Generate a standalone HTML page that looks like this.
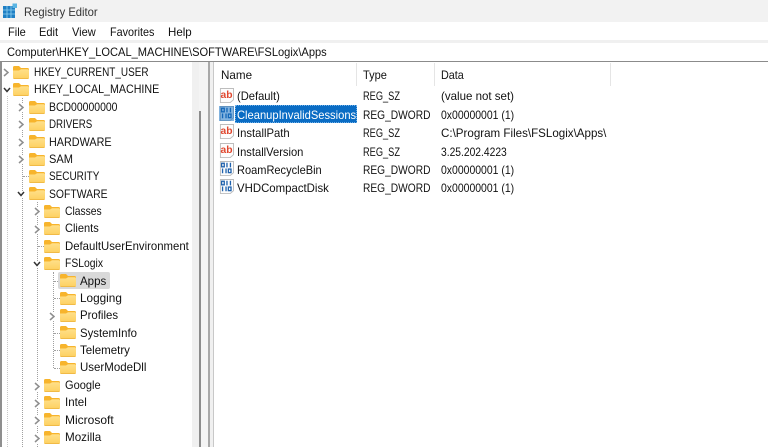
<!DOCTYPE html>
<html><head><meta charset="utf-8">
<style>
html,body{margin:0;padding:0;width:768px;height:447px;overflow:hidden;background:#fff}
body{position:relative;font-family:"Liberation Sans",sans-serif;font-size:12px;color:#111}
#w{position:absolute;left:0;top:0;width:768px;height:447px;overflow:hidden;filter:blur(.35px)}
.a{position:absolute}
.t{position:absolute;white-space:nowrap;line-height:16px;height:16px;transform-origin:0 50%;transform:scaleX(var(--s,1))}
svg{position:absolute;overflow:visible}
svg.k{background:#fff}
.d{position:absolute;border-left:1px dotted #a0a0a0}
.h{position:absolute;border-top:1px dotted #a0a0a0}
</style></head><body><div id="w">
<svg width="0" height="0" style="position:absolute">
<defs>
<linearGradient id="g" x1="0" y1="0" x2="0" y2="1"><stop offset="0" stop-color="#ffe08a"/><stop offset="1" stop-color="#fdd060"/></linearGradient>
<symbol id="f" viewBox="0 0 16 13" overflow="visible"><path d="M0 1.5Q0 0 1.5 0H6L8 2H14.5Q16 2 16 3.5V6H0Z" fill="#f7b42c"/><path d="M0 4.5H6L8 3.2H14.5Q16 3.2 16 4.7V11.5Q16 13 14.5 13H1.5Q0 13 0 11.5Z" fill="url(#g)"/><path d="M.5 12.6H15.5" stroke="#eeb53f" stroke-width=".8"/></symbol>
<symbol id="c" viewBox="0 0 6 9"><path d="M1 1L5 4.5L1 8" fill="none" stroke="#8e8e8e" stroke-width="1.5"/></symbol>
<symbol id="o" viewBox="0 0 8 6"><path d="M1 1L4 4.5L7 1" fill="none" stroke="#333" stroke-width="1.5"/></symbol>
<symbol id="ab" viewBox="0 0 16 16"><path d="M1.5 .5H15.5V12.5L12 15.5H1.5Z" fill="#fdfdfd" stroke="#bdbdbd"/><text x="1.6" y="10.5" font-family="Liberation Sans" font-weight="bold" font-size="11" fill="#e0472e">ab</text></symbol>
<symbol id="bin" viewBox="0 0 16 16"><path d="M1.5 .5H15.5V12.5L12 15.5H1.5Z" fill="#fdfdfd" stroke="#bdbdbd"/><g fill="none" stroke="#1f62ad" stroke-width="1.4"><rect x="2.8" y="2.4" width="2.8" height="3.8"/><path d="M8.5 1.8V6.8M12.2 1.8V6.8"/><path d="M3.8 8V13M7.5 8V13"/><rect x="10" y="8.6" width="2.8" height="3.8"/></g></symbol>
</defs></svg>

<!-- title bar -->
<div class="a" style="left:0;top:0;width:768px;height:22px;background:#f2f2f2"></div>
<svg style="left:3px;top:3px" width="15" height="15" viewBox="0 0 15 15"><rect x="0" y="3" width="12" height="12" fill="#1f7fc4"/><path d="M4 3V15M8 3V15M0 7H12M0 11H12" stroke="#8fd0ef" stroke-width=".8"/><rect x="9.5" y=".5" width="4.5" height="4.5" fill="#5ab4e2"/></svg>
<div class="t" style="left:24px;top:4px;color:#333;--s:.936">Registry Editor</div>
<!-- menu -->
<div class="t" style="left:8px;top:24px;--s:.92">File</div>
<div class="t" style="left:39px;top:24px;--s:.92">Edit</div>
<div class="t" style="left:72px;top:24px;--s:.92">View</div>
<div class="t" style="left:110px;top:24px;--s:.9">Favorites</div>
<div class="t" style="left:168px;top:24px;--s:.96">Help</div>
<!-- address -->
<div class="a" style="left:0;top:40px;width:768px;height:2.5px;background:#f0f0f0"></div>
<div class="t" style="left:7px;top:44px;--s:.925">Computer\HKEY_LOCAL_MACHINE\SOFTWARE\FSLogix\Apps</div>
<div class="a" style="left:0;top:60.5px;width:768px;height:1.5px;background:#8b8b8b"></div>

<!-- panes -->
<div class="a" style="left:0;top:62px;width:1.5px;height:385px;background:#8f8f8f"></div>
<div class="a" style="left:192px;top:62px;width:7px;height:385px;background:#f0f0f0"></div>
<div class="a" style="left:199px;top:62px;width:9px;height:385px;background:#f4f4f4"></div>
<div class="a" style="left:199px;top:111px;width:1.6px;height:336px;background:#8c8c8c"></div>
<div class="a" style="left:208px;top:62px;width:1.5px;height:385px;background:#a8a8a8"></div>
<div class="a" style="left:209.5px;top:62px;width:3.5px;height:385px;background:#f0f0f0"></div>
<div class="a" style="left:213px;top:62px;width:1px;height:385px;background:#c8c8c8"></div>

<!-- tree guides -->
<div class="d" style="left:7px;top:96px;height:351px;border-color:#c8c8c8"></div>
<div class="d" style="left:22px;top:98px;height:349px"></div>
<div class="d" style="left:37px;top:202px;height:245px"></div>
<div class="d" style="left:53px;top:272px;height:96px"></div>
<div class="h" style="left:23px;top:176px;width:6px"></div>
<div class="h" style="left:38px;top:246px;width:6px"></div>
<div class="h" style="left:54px;top:281px;width:6px"></div>
<div class="h" style="left:54px;top:298px;width:6px"></div>
<div class="h" style="left:54px;top:333px;width:6px"></div>
<div class="h" style="left:54px;top:350px;width:6px"></div>
<div class="h" style="left:54px;top:368px;width:6px"></div>

<!-- Apps selection -->
<div class="a" style="left:58px;top:272px;width:52px;height:17px;background:#d9d9d9;border-radius:2px"></div>

<!-- tree: chevrons -->
<svg class="k" style="left:3px;top:68px" width="6" height="9"><use href="#c"/></svg>
<svg class="k" style="left:3px;top:87px" width="8" height="6"><use href="#o"/></svg>
<svg class="k" style="left:18px;top:103px" width="6" height="9"><use href="#c"/></svg>
<svg class="k" style="left:18px;top:120px" width="6" height="9"><use href="#c"/></svg>
<svg class="k" style="left:18px;top:138px" width="6" height="9"><use href="#c"/></svg>
<svg class="k" style="left:18px;top:155px" width="6" height="9"><use href="#c"/></svg>
<svg class="k" style="left:17px;top:191px" width="8" height="6"><use href="#o"/></svg>
<svg class="k" style="left:34px;top:207px" width="6" height="9"><use href="#c"/></svg>
<svg class="k" style="left:34px;top:225px" width="6" height="9"><use href="#c"/></svg>
<svg class="k" style="left:33px;top:261px" width="8" height="6"><use href="#o"/></svg>
<svg class="k" style="left:49px;top:312px" width="6" height="9"><use href="#c"/></svg>
<svg class="k" style="left:34px;top:382px" width="6" height="9"><use href="#c"/></svg>
<svg class="k" style="left:34px;top:399px" width="6" height="9"><use href="#c"/></svg>
<svg class="k" style="left:34px;top:416px" width="6" height="9"><use href="#c"/></svg>
<svg class="k" style="left:34px;top:434px" width="6" height="9"><use href="#c"/></svg>

<!-- tree: folders -->
<svg style="left:13px;top:66px" width="16" height="13"><use href="#f"/></svg>
<svg style="left:13px;top:83px" width="16" height="13"><use href="#f"/></svg>
<svg style="left:29px;top:101px" width="16" height="13"><use href="#f"/></svg>
<svg style="left:29px;top:118px" width="16" height="13"><use href="#f"/></svg>
<svg style="left:29px;top:135px" width="16" height="13"><use href="#f"/></svg>
<svg style="left:29px;top:153px" width="16" height="13"><use href="#f"/></svg>
<svg style="left:29px;top:170px" width="16" height="13"><use href="#f"/></svg>
<svg style="left:29px;top:187px" width="16" height="13"><use href="#f"/></svg>
<svg style="left:44px;top:205px" width="16" height="13"><use href="#f"/></svg>
<svg style="left:44px;top:222px" width="16" height="13"><use href="#f"/></svg>
<svg style="left:44px;top:240px" width="16" height="13"><use href="#f"/></svg>
<svg style="left:44px;top:257px" width="16" height="13"><use href="#f"/></svg>
<svg style="left:60px;top:274px" width="16" height="13"><use href="#f"/></svg>
<svg style="left:60px;top:292px" width="16" height="13"><use href="#f"/></svg>
<svg style="left:60px;top:309px" width="16" height="13"><use href="#f"/></svg>
<svg style="left:60px;top:326px" width="16" height="13"><use href="#f"/></svg>
<svg style="left:60px;top:344px" width="16" height="13"><use href="#f"/></svg>
<svg style="left:60px;top:361px" width="16" height="13"><use href="#f"/></svg>
<svg style="left:44px;top:379px" width="16" height="13"><use href="#f"/></svg>
<svg style="left:44px;top:396px" width="16" height="13"><use href="#f"/></svg>
<svg style="left:44px;top:413px" width="16" height="13"><use href="#f"/></svg>
<svg style="left:44px;top:431px" width="16" height="13"><use href="#f"/></svg>

<!-- tree: labels -->
<div class="t" style="left:34px;top:64px;--s:.83">HKEY_CURRENT_USER</div>
<div class="t" style="left:34px;top:81px;--s:.89">HKEY_LOCAL_MACHINE</div>
<div class="t" style="left:49px;top:99px;--s:.87">BCD00000000</div>
<div class="t" style="left:49px;top:116px;--s:.81">DRIVERS</div>
<div class="t" style="left:49px;top:134px;--s:.9">HARDWARE</div>
<div class="t" style="left:49px;top:151px;--s:.92">SAM</div>
<div class="t" style="left:49px;top:168px;--s:.83">SECURITY</div>
<div class="t" style="left:49px;top:186px;--s:.866">SOFTWARE</div>
<div class="t" style="left:65px;top:203px;--s:.86">Classes</div>
<div class="t" style="left:65px;top:220px;--s:.92">Clients</div>
<div class="t" style="left:65px;top:238px;--s:.947">DefaultUserEnvironment</div>
<div class="t" style="left:65px;top:255px;--s:.864">FSLogix</div>
<div class="t" style="left:80px;top:273px;--s:.96">Apps</div>
<div class="t" style="left:80px;top:290px;--s:.98">Logging</div>
<div class="t" style="left:80px;top:307px;--s:.95">Profiles</div>
<div class="t" style="left:80px;top:325px;--s:.95">SystemInfo</div>
<div class="t" style="left:80px;top:342px;--s:.96">Telemetry</div>
<div class="t" style="left:80px;top:359px;--s:.957">UserModeDll</div>
<div class="t" style="left:65px;top:377px;--s:.92">Google</div>
<div class="t" style="left:65px;top:394px;--s:.96">Intel</div>
<div class="t" style="left:65px;top:412px">Microsoft</div>
<div class="t" style="left:65px;top:429px;--s:.97">Mozilla</div>

<!-- list header -->
<div class="t" style="left:221px;top:67px;--s:.97">Name</div>
<div class="t" style="left:363px;top:67px;--s:.92">Type</div>
<div class="t" style="left:441px;top:67px;--s:.9">Data</div>
<div class="a" style="left:356px;top:63px;width:1px;height:23px;background:#e5e5e5"></div>
<div class="a" style="left:434px;top:63px;width:1px;height:23px;background:#e5e5e5"></div>
<div class="a" style="left:610px;top:63px;width:1px;height:23px;background:#e5e5e5"></div>

<!-- list rows -->
<div class="a" style="left:235px;top:105px;width:122px;height:18px;background:#0a6cc4;outline:1px dotted #6fb0e8;outline-offset:-1px"></div>
<svg style="left:219px;top:88px" width="15" height="15"><use href="#ab"/></svg>
<svg style="left:219px;top:106px" width="15" height="15"><use href="#bin"/></svg>
<div class="a" style="left:219px;top:106px;width:15px;height:15px;background:rgba(10,108,196,.5)"></div>
<svg style="left:219px;top:124px" width="15" height="15"><use href="#ab"/></svg>
<svg style="left:219px;top:143px" width="15" height="15"><use href="#ab"/></svg>
<svg style="left:219px;top:161px" width="15" height="15"><use href="#bin"/></svg>
<svg style="left:219px;top:179px" width="15" height="15"><use href="#bin"/></svg>

<div class="t" style="left:237px;top:88px;--s:.93">(Default)</div>
<div class="t" style="left:237px;top:107px;color:#fff;--s:.93">CleanupInvalidSessions</div>
<div class="t" style="left:236.5px;top:125px;--s:.94">InstallPath</div>
<div class="t" style="left:236.5px;top:144px;--s:.93">InstallVersion</div>
<div class="t" style="left:236.5px;top:162px;--s:.92">RoamRecycleBin</div>
<div class="t" style="left:236.5px;top:180px;--s:.95">VHDCompactDisk</div>

<div class="t" style="left:363px;top:88px;--s:.77">REG_SZ</div>
<div class="t" style="left:363px;top:107px;--s:.85">REG_DWORD</div>
<div class="t" style="left:363px;top:125px;--s:.77">REG_SZ</div>
<div class="t" style="left:363px;top:144px;--s:.77">REG_SZ</div>
<div class="t" style="left:363px;top:162px;--s:.85">REG_DWORD</div>
<div class="t" style="left:363px;top:180px;--s:.85">REG_DWORD</div>

<div class="t" style="left:441px;top:88px;--s:.96">(value not set)</div>
<div class="t" style="left:441px;top:107px;--s:.87">0x00000001 (1)</div>
<div class="t" style="left:441px;top:125px;--s:.965">C:\Program Files\FSLogix\Apps\</div>
<div class="t" style="left:441px;top:144px;--s:.857">3.25.202.4223</div>
<div class="t" style="left:441px;top:162px;--s:.87">0x00000001 (1)</div>
<div class="t" style="left:441px;top:180px;--s:.87">0x00000001 (1)</div>
</div></body></html>
